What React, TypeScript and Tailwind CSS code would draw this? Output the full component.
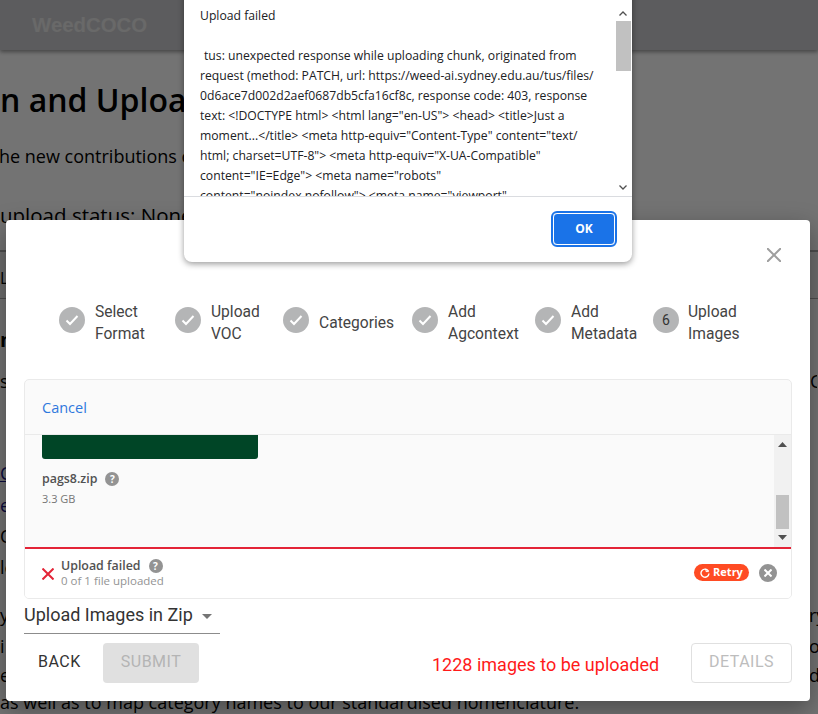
import { ReactNode } from 'react';

const steps = [
  { label: ['Select', 'Format'], w: 'w-[116px]' },
  { label: ['Upload', 'VOC'], w: 'w-[108px]' },
  { label: ['Categories'], w: 'w-[129px]' },
  { label: ['Add', 'Agcontext'], w: 'w-[123px]' },
  { label: ['Add', 'Metadata'], w: 'w-[118px]' },
];

const alertLines = [
  'request (method: PATCH, url: https://weed-ai.sydney.edu.au/tus/files/',
  '0d6ace7d002d2aef0687db5cfa16cf8c, response code: 403, response',
  'text: <!DOCTYPE html> <html lang="en-US"> <head> <title>Just a',
  'moment...</title> <meta http-equiv="Content-Type" content="text/',
  'html; charset=UTF-8"> <meta http-equiv="X-UA-Compatible"',
  'content="IE=Edge"> <meta name="robots"',
  'content="noindex,nofollow"> <meta name="viewport"',
];

// page text that still shows on both sides of the modal
const sideRows = [
  { left: 'Co', leftClass: 'underline text-[#1a1a8c]', right: '', h: 'h-[32px]' },
  { left: 'e', leftClass: 'text-[#1a1a8c]', right: '', h: 'h-[31px]' },
  { left: 'O', leftClass: '', right: '', h: 'h-[31px]' },
  { left: 'le', leftClass: '', right: '', h: 'h-[48px]' },
  { left: 'y', leftClass: '', right: 'ry', h: 'h-[31px]' },
  { left: 'i', leftClass: '', right: 'or', h: 'h-[29px]' },
  { left: 'e', leftClass: '', right: 'd', h: 'h-[27px]' },
];

function Circle({ children }: { children: ReactNode }) {
  return (
    <div className="w-[26px] h-[26px] rounded-full bg-[#b4b5b6] flex items-center justify-center text-[14px] text-[#333] shrink-0">
      {children}
    </div>
  );
}

function Help({ className }: { className: string }) {
  return (
    <span className={`w-[14px] h-[14px] rounded-full bg-[#939393] text-white text-[10px] font-bold flex items-center justify-center ${className}`}>
      ?
    </span>
  );
}

function Background() {
  return (
    <div className="h-[714px] bg-white text-black font-['Open_Sans',sans-serif] overflow-hidden">
      <div className="h-[50px] bg-[#cdcdd0] pl-8 flex items-center shadow-[0_2px_4px_rgba(0,0,0,0.4)]">
        <span className="text-[20.4px] font-bold text-[#e8e8e8] font-['Liberation_Sans',sans-serif]">WeedCOCO</span>
      </div>
      <div className="mt-[27px] text-[32px] leading-[46px] font-semibold whitespace-nowrap">n and Upload</div>
      <div className="mt-[21px] -ml-px text-[18px] leading-[24px] whitespace-nowrap">he new contributions c</div>
      <div className="mt-[33px] text-[20.5px] leading-[28px] whitespace-nowrap">upload status: None</div>
      <div className="mt-[21px] h-[49px] border-t-2 border-[#aaa] bg-[#f2f2f2] border-b flex items-center pt-[6px] text-[16px] leading-none">L</div>
      <div className="mt-[27px] text-[20px] leading-[28px] font-bold">n</div>
      <div className="flex justify-between text-[18px] leading-[28px] mt-[13px] pr-[1px]">
        <span>s</span>
        <span className="w-[7px] overflow-hidden">C</span>
      </div>
      <div className="mt-[64px] text-[18px] leading-[28px]">
        {sideRows.map((r, i) => (
          <div key={i} className={`flex justify-between ${r.h}`}>
            <span className={r.leftClass}>{r.left}</span>
            <span className="w-[9px] overflow-hidden">{r.right}</span>
          </div>
        ))}
        <div className="whitespace-nowrap">as well as to map category names to our standardised nomenclature.</div>
      </div>
    </div>
  );
}

export default function App() {
  return (
    <div className="relative w-[818px] h-[714px] overflow-hidden font-['Roboto',sans-serif]">
      <Background />
      <div className="absolute inset-0 bg-black/55" />

      {/* main modal */}
      <div className="absolute left-[6px] top-[220px] w-[804px] h-[481px] bg-white rounded-[4px] shadow-[0_8px_24px_rgba(0,0,0,0.35)] flex flex-col">
        <div className="h-[70px] flex justify-end pt-[28px] pr-[29px]">
          <svg width="14" height="14" viewBox="0 0 14 14" stroke="#9e9e9e" strokeWidth="2" fill="none">
            <path d="M0 0 14 14M14 0 0 14" />
          </svg>
        </div>
        <div className="flex items-center pl-[53px] h-[60px] text-[15.6px] leading-[22px] text-[#444]">
          {steps.map((s) => (
            <div key={s.label.join()} className={`flex items-center gap-[10px] ${s.w}`}>
              <Circle>
                <svg width="14" height="12" viewBox="0 0 14 12" fill="none" stroke="white" strokeWidth="2">
                  <path d="M1.5 6.5 5 10 12.5 2" />
                </svg>
              </Circle>
              <div className="mt-[5px]">{s.label.map((l) => <div key={l}>{l}</div>)}</div>
            </div>
          ))}
          <div className="flex items-center gap-[9px]">
            <Circle>6</Circle>
            <div className="mt-[5px]"><div>Upload</div><div>Images</div></div>
          </div>
        </div>

        {/* uppy dashboard */}
        <div className="ml-[18px] mt-[29px] w-[768px] h-[220px] border border-[#eaeaea] rounded-[5px] bg-[#fafafa] flex flex-col overflow-hidden font-['Open_Sans',sans-serif]">
          <div className="h-[55px] border-b border-[#eaeaea] pl-[17px] pt-[2px] flex items-center text-[14.5px] text-[#2f78dd]">Cancel</div>
          <div className="h-[112px] flex">
            <div className="flex-1 pl-[17px]">
              <div className="w-[216px] h-[24px] bg-[#004526] rounded-b-[3px]" />
              <div className="mt-[12px] flex items-center h-[16px]">
                <span className="text-[12.4px] font-semibold text-[#525252]">pags8.zip</span>
                <Help className="ml-[8px]" />
              </div>
              <div className="mt-[4px] text-[11px] leading-[15px] text-[#757575]">3.3 GB</div>
            </div>
            <div className="w-[17px] bg-[#f1f1f1] flex flex-col items-center">
              <svg className="mt-[7px]" width="9" height="5" viewBox="0 0 9 5" fill="#505050"><path d="M4.5 0 9 5H0Z" /></svg>
              <div className="mt-[48px] -ml-px w-[13px] h-[34px] bg-[#c1c1c1]" />
              <svg className="mt-[6px]" width="9" height="5" viewBox="0 0 9 5" fill="#505050"><path d="M0 0H9L4.5 5Z" /></svg>
            </div>
          </div>
          <div className="h-[2px] bg-[#e32437]" />
          <div className="flex-1 bg-white flex items-center pl-[17px] pr-[14px] pb-[2px]">
            <svg className="mt-[3px]" width="12" height="12" viewBox="0 0 12 12" stroke="#e32437" strokeWidth="2" fill="none">
              <path d="M0.5 0.5 11.5 11.5M11.5 0.5 0.5 11.5" />
            </svg>
            <div className="ml-[7px] flex-1">
              <div className="flex items-center text-[12.4px] leading-[16px] font-semibold text-[#525252]">
                Upload failed
                <Help className="ml-[8px]" />
              </div>
              <div className="text-[11.5px] leading-[14px] text-[#939393]">0 of 1 file uploaded</div>
            </div>
            <div className="w-[55px] h-[17px] rounded-full bg-[#ff4b23] flex items-center justify-center gap-[3px] text-white text-[11px] font-bold">
              <svg width="10" height="10" viewBox="0 0 10 10" fill="none" stroke="white" strokeWidth="1.4">
                <path d="M8.5 3.2A4 4 0 1 0 9 5.5" />
                <path d="M6 .8V3.6H8.8" strokeWidth="1" />
              </svg>
              Retry
            </div>
            <div className="ml-[10px] w-[18px] h-[18px] rounded-full bg-[#939393] flex items-center justify-center">
              <svg width="8" height="8" viewBox="0 0 8 8" stroke="white" strokeWidth="2" fill="none">
                <path d="M.5 .5 7.5 7.5M7.5 .5 .5 7.5" />
              </svg>
            </div>
          </div>
        </div>

        {/* zip select */}
        <div className="ml-[18px] w-[196px] h-[35px] border-b border-[#8c8c8c] flex items-center justify-between pr-[8px] pb-[4px] text-[18px] text-[#333]">
          Upload Images in Zip
          <svg className="mt-[4px]" width="10" height="5" viewBox="0 0 10 5" fill="#757575"><path d="M0 0H10L5 5Z" /></svg>
        </div>

        <div className="ml-[18px] mr-[18px] mt-[9px] flex items-center">
          <button className="w-[79px] h-10 pl-[14px] pb-[2px] text-left text-[16px] tracking-[0.5px] text-[#333]">BACK</button>
          <button className="w-[96px] h-10 pb-[2px] rounded-[4px] bg-[#e0e0e0] text-[#b4b4b4] text-[16px] tracking-[0.5px]">SUBMIT</button>
          <span className="ml-[233px] mt-[3px] text-[18px] text-[#ff1a1a]">1228 images to be uploaded</span>
          <button className="ml-auto w-[101px] h-10 pb-[2px] rounded-[4px] border border-[#e0e0e0] text-[#bdbdbd] text-[16px] tracking-[0.5px]">DETAILS</button>
        </div>
      </div>

      {/* browser alert */}
      <div className="absolute left-[184px] top-[-10px] w-[448px] h-[272px] bg-white rounded-b-[8px] shadow-[0_2px_6px_rgba(0,0,0,0.4)] flex flex-col font-['Open_Sans',sans-serif] text-[12.2px] text-[#202124]">
        <div className="h-[207px] flex border-b border-[#dadce0] overflow-hidden">
          <div className="flex-1 pl-4 pt-[16px] leading-[20px] whitespace-nowrap overflow-hidden">
            <div>Upload failed</div>
            <div className="mt-5 pl-1">tus: unexpected response while uploading chunk, originated from</div>
            {alertLines.map((l) => <div key={l}>{l}</div>)}
          </div>
          <div className="w-[16px] mr-px flex flex-col items-center">
            <svg className="mt-[21px]" width="8" height="5" viewBox="0 0 8 5" fill="none" stroke="#505050" strokeWidth="1.3"><path d="M.5 4.5 4 1 7.5 4.5" /></svg>
            <div className="mt-[5px] w-[15px] h-[50px] bg-[#c1c1c1]" />
            <svg className="mt-[114px]" width="8" height="5" viewBox="0 0 8 5" fill="none" stroke="#505050" strokeWidth="1.3"><path d="M.5 .5 4 4 7.5 .5" /></svg>
          </div>
        </div>
        <div className="flex-1 flex justify-end pt-[16px] pr-[17px]">
          <button className="w-[62px] h-[32px] rounded-[4px] bg-[#1a73e8] text-white text-[12px] font-bold border border-white outline-2 outline-[#1a73e8]">OK</button>
        </div>
      </div>
    </div>
  );
}
